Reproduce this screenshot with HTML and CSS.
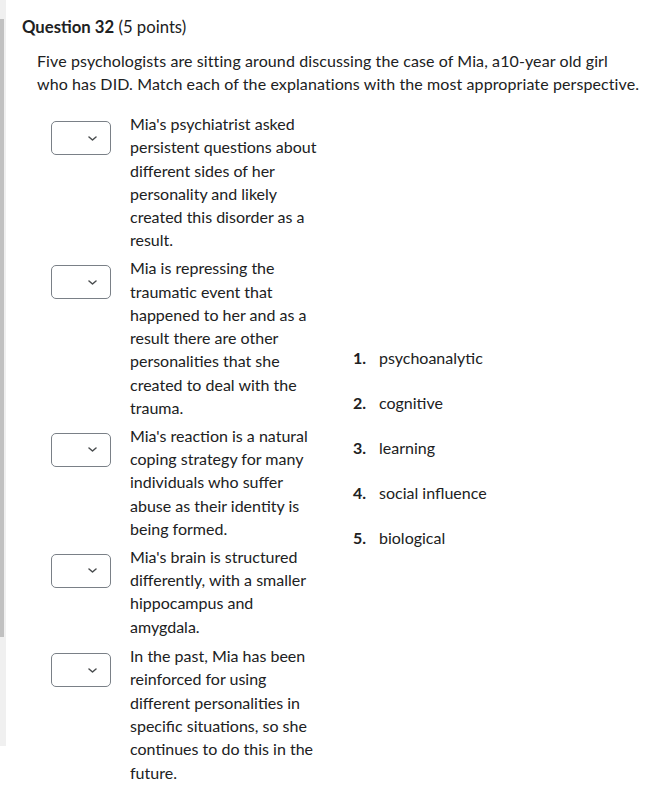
FILE: index.html
```html
<!DOCTYPE html>
<html>
<head>
<meta charset="utf-8">
<link rel="stylesheet" href="styles.css">
</head>
<body>
<div class="page">
  <div class="scroll"><div class="thumb"></div></div>
  <div class="content">
    <h2 class="q-title"><strong>Question 32</strong> (5 points)</h2>
    <p class="q-text">Five psychologists are sitting around discussing the case of Mia, a10-year old girl<br>who has DID. Match each of the explanations with the most appropriate perspective.</p>
    <div class="match">
      <div class="pairs">
        <div class="pair">
          <div class="select"><svg width="9" height="5" viewBox="0 0 9 5"><path d="M1 1 L4.5 4 L8 1" fill="none" stroke="#494c4e" stroke-width="1.5" stroke-linecap="round" stroke-linejoin="round"/></svg></div>
          <div class="stmt">Mia's psychiatrist asked persistent questions about different sides of her personality and likely created this disorder as a result.</div>
        </div>
        <div class="pair">
          <div class="select"><svg width="9" height="5" viewBox="0 0 9 5"><path d="M1 1 L4.5 4 L8 1" fill="none" stroke="#494c4e" stroke-width="1.5" stroke-linecap="round" stroke-linejoin="round"/></svg></div>
          <div class="stmt">Mia is repressing the traumatic event that happened to her and as a result there are other personalities that she created to deal with the trauma.</div>
        </div>
        <div class="pair">
          <div class="select"><svg width="9" height="5" viewBox="0 0 9 5"><path d="M1 1 L4.5 4 L8 1" fill="none" stroke="#494c4e" stroke-width="1.5" stroke-linecap="round" stroke-linejoin="round"/></svg></div>
          <div class="stmt">Mia's reaction is a natural coping strategy for many individuals who suffer abuse as their identity is being formed.</div>
        </div>
        <div class="pair">
          <div class="select"><svg width="9" height="5" viewBox="0 0 9 5"><path d="M1 1 L4.5 4 L8 1" fill="none" stroke="#494c4e" stroke-width="1.5" stroke-linecap="round" stroke-linejoin="round"/></svg></div>
          <div class="stmt">Mia's brain is structured differently, with a smaller hippocampus and amygdala.</div>
        </div>
        <div class="pair last">
          <div class="select"><svg width="9" height="5" viewBox="0 0 9 5"><path d="M1 1 L4.5 4 L8 1" fill="none" stroke="#494c4e" stroke-width="1.5" stroke-linecap="round" stroke-linejoin="round"/></svg></div>
          <div class="stmt">In the past, Mia has been reinforced for using different personalities in specific situations, so she continues to do this in the future.</div>
        </div>
      </div>
      <ol class="choices">
        <li><span class="num">1.</span><span>psychoanalytic</span></li>
        <li><span class="num">2.</span><span>cognitive</span></li>
        <li><span class="num">3.</span><span>learning</span></li>
        <li><span class="num">4.</span><span>social influence</span></li>
        <li><span class="num">5.</span><span>biological</span></li>
      </ol>
    </div>
  </div>
</div>
</body>
</html>
```
FILE: styles.css
```css
* { box-sizing: border-box; }
html, body { margin: 0; padding: 0; background: #ffffff; }
body {
  font-family: Lato, "Noto Sans", sans-serif;
  color: #202122;
}
.page {
  display: flex;
  align-items: flex-start;
}
.scroll {
  width: 6px;
  height: 746px;
  background: #f0f0f0;
  flex: none;
  padding-top: 19px;
}
.thumb {
  width: 4px;
  height: 618px;
  background: #c1c1c1;
}
.content {
  padding-left: 16px;
  flex: 1;
}
.q-title {
  margin: 16px 0 0 0;
  font-size: 16.7px;
  line-height: 22px;
  font-weight: 400;
}
.q-title strong { font-weight: 700; }
.q-text {
  margin: 11px 0 0 15px;
  font-size: 16px;
  line-height: 23px;
  letter-spacing: 0.1px;
  max-width: 620px;
}
.match {
  display: flex;
  align-items: center;
  margin: 17px 0 0 29px;
  gap: 27px;
}
.pairs {
  display: flex;
  flex-direction: column;
  gap: 4.5px;
  width: 275px;
}
.pair {
  display: flex;
  align-items: flex-start;
  gap: 19px;
}
.pair.last { margin-top: 1.5px; }
.select {
  flex: none;
  width: 60px;
  height: 34px;
  margin-top: 9px;
  border: 1px solid #7a8087;
  border-radius: 5px;
  display: flex;
  align-items: center;
  justify-content: flex-end;
  padding-right: 13px;
  background: #fff;
}
.select svg { display: block; }
.stmt {
  width: 196px;
  font-size: 16px;
  line-height: 23.3px;
}
.choices {
  list-style: none;
  margin: 0;
  padding: 0;
  display: flex;
  flex-direction: column;
  gap: 22px;
  font-size: 16px;
  line-height: 23px;
}
.choices li {
  display: flex;
}
.num {
  width: 26px;
  font-weight: 700;
}
```
